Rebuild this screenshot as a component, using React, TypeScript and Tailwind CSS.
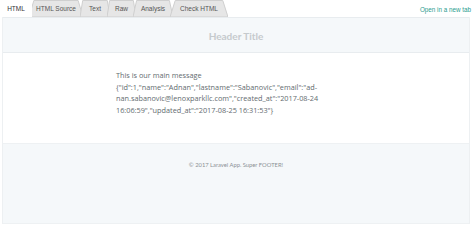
import React from "react"

const tabs = [
  { label: "HTML Source", w: "w-[54px]" },
  { label: "Text", w: "w-[30px]" },
  { label: "Raw", w: "w-[29px]" },
  { label: "Analysis", w: "w-[40px]" },
  { label: "Check HTML", w: "w-[58px]" },
]

function Tab({ label, w }: { label: string; w: string }) {
  return (
    <div className={`relative -ml-[3px] flex h-[17px] items-center justify-center ${w}`}>
      <svg
        className="absolute inset-0 h-full w-full"
        viewBox="0 0 100 17"
        preserveAspectRatio="none"
      >
        <path d="M0 17 L9 0.5 L91 0.5 L100 17 Z" fill="#e6e6e6" stroke="#cfcfcf" strokeWidth="1" vectorEffect="non-scaling-stroke" />
      </svg>
      <span className="relative text-[6.5px] text-[#555]">{label}</span>
    </div>
  )
}

export default function App() {
  return (
    <div className="h-[227px] w-[474px] overflow-hidden bg-white font-['Lato','Open_Sans',sans-serif]">
      {/* Tab bar */}
      <div className="flex h-[17px] items-end justify-between pr-[3px] font-['Liberation_Sans',sans-serif]">
        <div className="flex items-end">
          <div className="relative z-10 flex h-[17px] w-[32px] items-center justify-center bg-white">
            <span className="text-[6.5px] text-[#333]">HTML</span>
          </div>
          {tabs.map((t) => (
            <Tab key={t.label} label={t.label} w={t.w} />
          ))}
        </div>
        <a className="mb-[3px] shrink-0 whitespace-nowrap text-[6.3px] text-[#2a9d8f]">Open in a new tab</a>
      </div>

      {/* Panel */}
      <div className="ml-[2px] w-[468px] border-x border-[#edf0f2]">
        <div className="flex h-[36px] items-center justify-center border-y border-[#e8ecef] bg-[#f5f8fa] pt-[3px]">
          <span className="text-[10px] font-bold text-[#c5cacd]">Header Title</span>
        </div>
        <div className="h-[90px] bg-white pl-[113px] pt-[17px] font-['Open_Sans',sans-serif] text-[7.3px] leading-[11.7px] text-[#636b6f]">
          <p>This is our main message</p>
          <p>
            {'{"id":1,"name":"Adnan","lastname":"Sabanovic","email":"ad-'}
            <br />
            {'nan.sabanovic@lenoxparkllc.com","created_at":"2017-08-24'}
            <br />
            {'16:06:59","updated_at":"2017-08-25 16:31:53"}'}
          </p>
        </div>
        <div className="flex h-[81px] justify-center border-y border-[#eef1f3] bg-[#f5f8fa] pt-[17px]">
          <span className="text-[5.8px] text-[#8c9196]">© 2017 Laravel App. Super FOOTER!</span>
        </div>
      </div>
    </div>
  )
}
